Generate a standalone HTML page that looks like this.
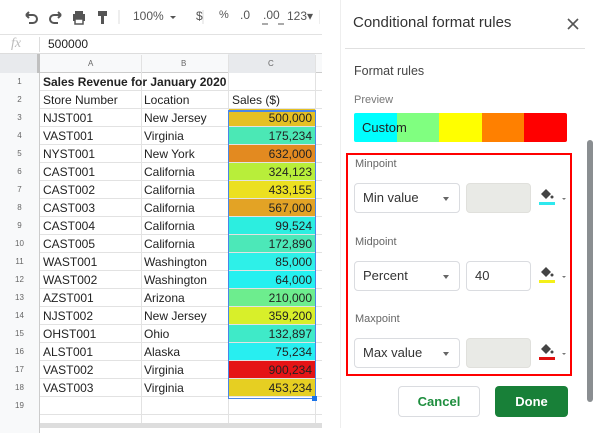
<!DOCTYPE html>
<html><head><style>
*{margin:0;padding:0;box-sizing:border-box}
body{width:600px;height:428px;overflow:hidden;background:#fff;font-family:"Liberation Sans",Arial,sans-serif;position:relative}
.a{position:absolute}
.tb{font-size:12px;color:#555}
.row{position:absolute;left:0;width:322px;height:18px;border-bottom:1px solid #e2e2e2;font-size:12px;color:#222}
.rn{position:absolute;left:0;width:40px;height:18px;background:#f8f9fa;border-right:1px solid #ccc;text-align:center;font-size:8px;color:#666;line-height:18px}
.ca{position:absolute;left:43px;line-height:18px}
.cb{position:absolute;left:144px;line-height:18px}
.cc{position:absolute;left:229px;width:86px;height:17px;text-align:right;padding-right:3px;line-height:18px}
.vl{position:absolute;top:55px;width:1px;height:373px;background:#e2e2e2}
.lbl{position:absolute;left:355px;font-size:11px;color:#666}
.dd{position:absolute;left:354px;width:106px;height:30px;border:1px solid #dadce0;border-radius:4px;font-size:13px;color:#333;padding-left:8px;line-height:28px}
.dd:after{content:"";position:absolute;right:10px;top:13px;border:3.5px solid transparent;border-top:4px solid #666}
.in{position:absolute;left:466px;width:65px;height:30px;border:1px solid #dadce0;border-radius:4px;font-size:13px;color:#333;padding-left:8px;line-height:28px}
.in.g{background:#e9eae6;border-color:#e0e0dc}
</style></head><body>
<div class="a" style="left:0;top:0;width:322px;height:34px;background:#fff"></div>
<svg class="a" style="left:20px;top:8px" width="300" height="18" viewBox="0 0 300 18">
<path d="M6 7h7a4 4 0 0 1 0 8H9M6 7l3-3M6 7l3 3" stroke="#555" stroke-width="2" fill="none"/>
<path d="M41 7h-7a4 4 0 0 0 0 8h4M41 7l-3-3M41 7l-3 3" stroke="#555" stroke-width="2" fill="none"/>
<rect x="53" y="6" width="12" height="7" fill="#555"/><rect x="55" y="3" width="8" height="3" fill="#555"/><rect x="55" y="11" width="8" height="5" fill="#fff" stroke="#555" stroke-width="1.5"/>
<rect x="78" y="3" width="9" height="5" fill="#555"/><rect x="81" y="8" width="3" height="8" fill="#555"/>
<line x1="99" y1="2" x2="99" y2="16" stroke="#ddd"/>
<line x1="183" y1="2" x2="183" y2="16" stroke="#ddd"/>
<line x1="300" y1="2" x2="300" y2="16" stroke="#ddd"/>
<path d="M150 8l3 3 3-3z" fill="#555"/>
<path d="M258 16h6M242 16h6" stroke="#555"/>
</svg>
<div class="a tb" style="left:133px;top:9px">100%</div>
<div class="a tb" style="left:196px;top:9px">$</div>
<div class="a tb" style="left:219px;top:9px;font-size:11px">%</div>
<div class="a tb" style="left:240px;top:8px">.0</div>
<div class="a tb" style="left:263px;top:8px">.00</div>
<div class="a tb" style="left:287px;top:9px">123▾</div>
<div class="a" style="left:0;top:34px;width:322px;height:20px;border-top:1px solid #e2e2e2;border-bottom:1px solid #ddd"></div>
<div class="a" style="left:11px;top:36px;font-family:'Liberation Serif',serif;font-style:italic;font-size:14px;color:#bbb">fx</div>
<div class="a" style="left:39px;top:37px;width:1px;height:15px;background:#ddd"></div>
<div class="a" style="left:48px;top:37px;font-size:12px;color:#222">500000</div>
<div class="a" style="left:0;top:54px;width:322px;height:19px;background:#f8f9fa;border-bottom:1px solid #ccc"></div>
<div class="a" style="left:0;top:54px;width:40px;height:19px;background:#e8eaed;border-right:3px solid #c0c0c0"></div>
<div class="a" style="left:228px;top:54px;width:87px;height:19px;background:#e8eaed"></div>
<div class="a" style="left:88px;top:59px;font-size:8px;color:#666">A</div>
<div class="a" style="left:181px;top:59px;font-size:8px;color:#666">B</div>
<div class="a" style="left:268px;top:59px;font-size:8px;color:#666">C</div>
<div class="vl" style="left:141px"></div><div class="vl" style="left:228px"></div><div class="vl" style="left:315px"></div>
<div class="row" style="top:73px"><div class="rn">1</div><div class="ca" style="font-weight:bold">Sales Revenue for January 2020</div></div>
<div class="row" style="top:91px"><div class="rn">2</div><div class="ca">Store Number</div><div class="cb">Location</div><div class="cc" style="text-align:left;padding-left:3px">Sales ($)</div></div>
<div class="row" style="top:109px"><div class="rn">3</div><div class="ca">NJST001</div><div class="cb">New Jersey</div><div class="cc" style="background:#e5c022">500,000</div></div>
<div class="row" style="top:127px"><div class="rn">4</div><div class="ca">VAST001</div><div class="cb">Virginia</div><div class="cc" style="background:#4be8b5">175,234</div></div>
<div class="row" style="top:145px"><div class="rn">5</div><div class="ca">NYST001</div><div class="cb">New York</div><div class="cc" style="background:#e38a20">632,000</div></div>
<div class="row" style="top:163px"><div class="rn">6</div><div class="ca">CAST001</div><div class="cb">California</div><div class="cc" style="background:#b8ee3a">324,123</div></div>
<div class="row" style="top:181px"><div class="rn">7</div><div class="ca">CAST002</div><div class="cb">California</div><div class="cc" style="background:#ece020">433,155</div></div>
<div class="row" style="top:199px"><div class="rn">8</div><div class="ca">CAST003</div><div class="cb">California</div><div class="cc" style="background:#e3a325">567,000</div></div>
<div class="row" style="top:217px"><div class="rn">9</div><div class="ca">CAST004</div><div class="cb">California</div><div class="cc" style="background:#2ceee0">99,524</div></div>
<div class="row" style="top:235px"><div class="rn">10</div><div class="ca">CAST005</div><div class="cb">California</div><div class="cc" style="background:#4ce8b8">172,890</div></div>
<div class="row" style="top:253px"><div class="rn">11</div><div class="ca">WAST001</div><div class="cb">Washington</div><div class="cc" style="background:#2ef0e8">85,000</div></div>
<div class="row" style="top:271px"><div class="rn">12</div><div class="ca">WAST002</div><div class="cb">Washington</div><div class="cc" style="background:#25f0f0">64,000</div></div>
<div class="row" style="top:289px"><div class="rn">13</div><div class="ca">AZST001</div><div class="cb">Arizona</div><div class="cc" style="background:#6ded8e">210,000</div></div>
<div class="row" style="top:307px"><div class="rn">14</div><div class="ca">NJST002</div><div class="cb">New Jersey</div><div class="cc" style="background:#d8ef2a">359,200</div></div>
<div class="row" style="top:325px"><div class="rn">15</div><div class="ca">OHST001</div><div class="cb">Ohio</div><div class="cc" style="background:#3feac8">132,897</div></div>
<div class="row" style="top:343px"><div class="rn">16</div><div class="ca">ALST001</div><div class="cb">Alaska</div><div class="cc" style="background:#28eef0">75,234</div></div>
<div class="row" style="top:361px"><div class="rn">17</div><div class="ca">VAST002</div><div class="cb">Virginia</div><div class="cc" style="background:#e51416">900,234</div></div>
<div class="row" style="top:379px"><div class="rn">18</div><div class="ca">VAST003</div><div class="cb">Virginia</div><div class="cc" style="background:#e6cf22">453,234</div></div>
<div class="row" style="top:397px"><div class="rn">19</div></div>
<div class="row" style="top:415px;border:none"><div class="rn"></div></div>
<div class="a" style="left:228px;top:110px;width:88px;height:289px;border:1px solid #4a86e8;border-top-width:2px"></div>
<div class="a" style="left:312px;top:396px;width:5px;height:5px;background:#1a73e8"></div>
<div class="a" style="left:40px;top:423px;width:282px;height:5px;background:#ddd"></div>
<div class="a" style="left:340px;top:0;width:260px;height:428px;background:#fff;border-left:1px solid #eee"></div>
<div class="a" style="left:353px;top:14px;font-size:15px;color:#333">Conditional format rules</div>
<svg class="a" style="left:567px;top:18px" width="12" height="12"><path d="M1 1l10 10M11 1L1 11" stroke="#555" stroke-width="1.6"/></svg>
<div class="a" style="left:345px;top:48px;width:240px;height:1px;background:#e0e0e0"></div>
<div class="a" style="left:354px;top:64px;font-size:12.5px;color:#444">Format rules</div>
<div class="a" style="left:354px;top:94px;font-size:11px;color:#777">Preview</div>
<div class="a" style="left:354px;top:113px;width:213px;height:29px;display:flex;border-radius:2px;overflow:hidden">
<div style="flex:1;background:#00ffff"></div><div style="flex:1;background:#80ff80"></div><div style="flex:1;background:#ffff00"></div><div style="flex:1;background:#ff8000"></div><div style="flex:1;background:#ff0000"></div></div>
<div class="a" style="left:362px;top:120px;font-size:13px;color:#222">Custom</div>
<div class="a" style="left:346px;top:153px;width:226px;height:223px;border:2px solid #f00"></div>
<div class="lbl" style="top:158px">Minpoint</div>
<div class="dd" style="top:183px">Min value</div><div class="in g" style="top:183px"></div>
<div class="lbl" style="top:236px">Midpoint</div>
<div class="dd" style="top:261px">Percent</div><div class="in" style="top:261px">40</div>
<div class="lbl" style="top:313px">Maxpoint</div>
<div class="dd" style="top:338px">Max value</div><div class="in g" style="top:338px"></div>
<svg class="a" style="left:537px;top:186px" width="30" height="24"><path d="M4 8l5-5 5 5-5 5z" fill="#444"/><circle cx="15" cy="11" r="1.5" fill="#444"/><rect x="2" y="16" width="16" height="3" fill="#2ee8ee"/><path d="M25 12l2 2 2-2z" fill="#777"/></svg>
<svg class="a" style="left:537px;top:264px" width="30" height="24"><path d="M4 8l5-5 5 5-5 5z" fill="#444"/><circle cx="15" cy="11" r="1.5" fill="#444"/><rect x="2" y="16" width="16" height="3" fill="#f4f01a"/><path d="M25 12l2 2 2-2z" fill="#777"/></svg>
<svg class="a" style="left:537px;top:341px" width="30" height="24"><path d="M4 8l5-5 5 5-5 5z" fill="#444"/><circle cx="15" cy="11" r="1.5" fill="#444"/><rect x="2" y="16" width="16" height="3" fill="#e01010"/><path d="M25 12l2 2 2-2z" fill="#777"/></svg>
<div class="a" style="left:398px;top:386px;width:82px;height:31px;border:1px solid #dadce0;border-radius:4px;text-align:center;line-height:29px;font-size:13px;font-weight:bold;color:#1e8e3e">Cancel</div>
<div class="a" style="left:495px;top:386px;width:73px;height:31px;background:#188038;border-radius:4px;text-align:center;line-height:31px;font-size:13px;font-weight:bold;color:#fff">Done</div>
<div class="a" style="left:587px;top:140px;width:6px;height:262px;background:#8a8e91;border-radius:3px"></div>
</body></html>
